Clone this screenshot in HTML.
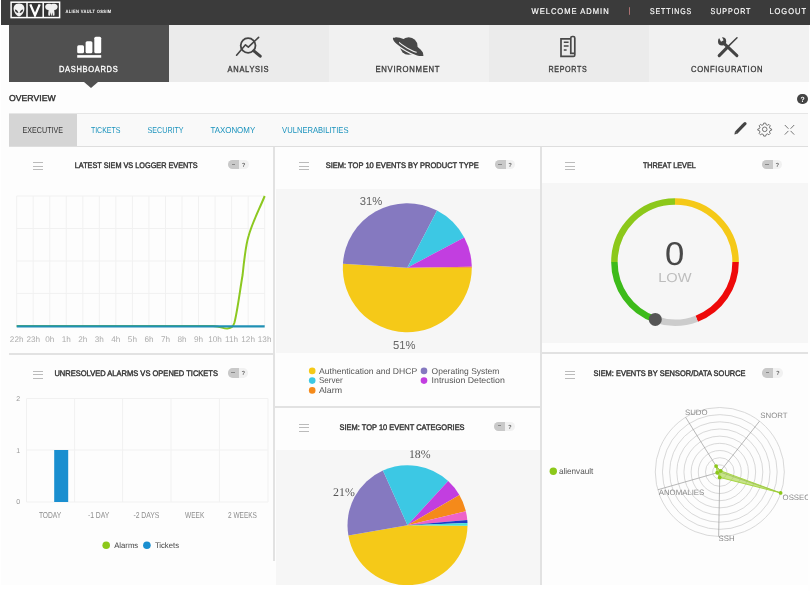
<!DOCTYPE html>
<html>
<head>
<meta charset="utf-8">
<style>
*{box-sizing:border-box;margin:0;padding:0}
html,body{width:811px;height:591px;overflow:hidden;background:#fff;font-family:"Liberation Sans",sans-serif;}
#root{position:relative;width:811px;height:591px;overflow:hidden;background:#fdfdfd}
.abs{position:absolute}
#top{left:1px;top:0;width:809px;height:24.5px;background:#3b3b3b}
.nav{position:absolute;top:25px;height:57px;width:160px}
.ham{position:absolute;width:10px;height:8px;border-top:1px solid #bbb;border-bottom:1px solid #bbb}
.ham:after{content:"";position:absolute;left:0;top:2.5px;width:10px;height:1px;background:#bbb}
.pill{position:absolute;width:20.6px;height:9.4px;border-radius:4.7px;background:#f1f1f1;overflow:hidden}
.pill i{position:absolute;left:0;top:0;width:11px;height:10px;background:#c9c9c9}
.pill b{position:absolute;left:3.7px;top:3.9px;width:3.4px;height:1px;background:#888}
.vl{position:absolute;width:2px;background:#e2e2e2}
.hl{position:absolute;height:2px;background:#e2e2e2}
.gbg{position:absolute;background:#f6f6f6}
svg text{font-family:"Liberation Sans",sans-serif;text-rendering:geometricPrecision}
</style>
</head>
<body>
<div id="root">
<div id="top" class="abs"></div>
<svg class="abs" style="left:0;top:0" width="70" height="25" viewBox="0 0 70 25">
<rect x="11.1" y="2.2" width="48.5" height="15.4" fill="#343434" stroke="#fff" stroke-width="1.5"/>
<path d="M27,2.2 V17.6 M43.2,2.2 V17.6" stroke="#fff" stroke-width="1.5"/>
<path d="M19,3.6 C23.4,3.6 24.8,6.8 24.3,9.8 C23.8,12.8 21,16.4 19,16.4 C17,16.4 14.2,12.8 13.7,9.8 C13.2,6.8 14.6,3.6 19,3.6 Z" fill="#f2f2f2"/>
<path d="M14.9,9.4 C16.4,9.4 18.2,11 18.4,13 C16.5,13 14.9,11.4 14.9,9.4 Z M23.1,9.4 C21.6,9.4 19.8,11 19.6,13 C21.5,13 23.1,11.4 23.1,9.4 Z" fill="#383838"/>
<path d="M30.3,4.4 L35,15.4 L39.7,4.4" fill="none" stroke="#fff" stroke-width="2.3"/>
<path d="M45.6,5.2 C47,3.6 49.4,3.6 51.4,4.2 C53.4,3.6 55.8,3.6 57.2,5.2 C58.2,6.8 57.4,9 55.8,9.8 L54.2,10 C54.4,12 54.8,13.8 54.4,15.6 L52.8,15.8 L52.5,12.2 L51.4,16.4 L50.3,12.2 L50,15.8 L48.4,15.6 C48,13.8 48.4,12 48.6,10 L47,9.8 C45.4,9 44.6,6.8 45.6,5.2 Z" fill="#efefef"/>
</svg>
<div class="nav" style="left:9px;background:#505050"></div>
<div class="nav" style="left:169px;background:#ebebeb"></div>
<div class="nav" style="left:329px;background:#f1f1f1"></div>
<div class="nav" style="left:489px;background:#ebebeb"></div>
<div class="nav" style="left:649px;background:#f1f1f1"></div>
<div class="abs" style="left:84px;top:82px;width:0;height:0;border-left:7px solid transparent;border-right:7px solid transparent;border-top:6px solid #505050"></div>
<svg class="abs" style="left:0;top:25px" width="811" height="57" viewBox="0 25 811 57">
<g fill="#fff">
<rect x="77.2" y="45.2" width="6.8" height="8" rx="1.5"/>
<rect x="85.6" y="41.2" width="6.8" height="12" rx="1.5"/>
<rect x="94.3" y="36.8" width="6.9" height="16.4" rx="1.5"/>
<rect x="77.2" y="55.1" width="24" height="2.6"/>
</g>
<g fill="none" stroke="#444" stroke-linecap="round" stroke-linejoin="round">
<circle cx="248.1" cy="45.5" r="7.4" stroke-width="1.8"/>
<path d="M253.8,50.8 L260.2,56.2" stroke-width="3"/>
<path d="M236.6,55.2 L245.5,44.8 L248.3,47.1 L258.6,37.4" stroke-width="1.6"/>
</g>
<g>
<clipPath id="pl"><circle cx="408.7" cy="46" r="10.4"/></clipPath>
<g transform="translate(408.5,46.2) rotate(29.5)"><ellipse cx="0" cy="0" rx="16.6" ry="4.4" fill="#484848"/></g>
<circle cx="408.7" cy="46" r="8.8" fill="#484848"/>
<g clip-path="url(#pl)"><g transform="translate(408.5,46.2) rotate(29.5)" fill="none">
<path d="M-16.6,0 A16.6,3.9 0 0 0 16.6,0" stroke="#f1f1f1" stroke-width="4.3"/>
</g></g>
<g transform="translate(408.5,46.2) rotate(29.5)" fill="none">
<path d="M-16.6,0 A16.6,3.9 0 0 0 16.6,0" stroke="#484848" stroke-width="2.1"/>
</g>
</g>
<g fill="none" stroke="#484848" stroke-width="1.7">
<path d="M570.8,38.9 L561,38.9 L561,56.3 L573.4,56.3 Q574.8,56.3 574.8,54.9 L574.8,37.9 Q574.8,36.5 573.2,36.5 L572.4,36.5 Q570.8,36.5 570.8,37.9 L570.8,53.4 L574.8,53.4"/>
<path d="M563.8,42.2 L568.6,42.2 M563.8,46 L568.6,46 M563.8,49.9 L566.6,49.9" stroke-width="1.5"/>
</g>
<g stroke="#444" stroke-linecap="round" fill="none">
<path d="M723.5,42.8 L736.9,55.7" stroke-width="3"/>
<circle cx="722.1" cy="41.4" r="4.1" fill="#444" stroke="none"/>
<path d="M722.3,41 L719.6,35.6" stroke="#f1f1f1" stroke-width="2.9" stroke-linecap="butt"/>
<path d="M737,37.8 L728,46.6" stroke-width="1.5"/>
<path d="M726.6,48.2 L719.2,55.6" stroke-width="3.1"/>
</g>
</svg>
<div class="abs" style="left:797.2px;top:93.6px;width:10.6px;height:10.6px;border-radius:50%;background:#444"></div>
<div class="abs" style="left:9px;top:113px;width:799px;height:34px;background:#f9f9f9;border-top:1px solid #e6e6e6;border-bottom:1px solid #dedede"></div>
<div class="abs" style="left:9px;top:114px;width:68px;height:32px;background:#d5d5d5"></div>
<svg class="abs" style="left:725px;top:115px" width="86" height="30" viewBox="725 115 86 30">
<path d="M736.2,132.6 L743.2,125.4" stroke="#444" stroke-width="3.2" fill="none"/>
<path d="M743.4,125.2 L745,123.6" stroke="#444" stroke-width="3.2" stroke-linecap="round" fill="none"/>
<path d="M734.4,134.4 L735,131.6 L737.2,133.8 Z" fill="#444"/>
<g fill="none" stroke="#666" stroke-width="0.9">
<circle cx="764.7" cy="129.3" r="2.3"/>
<path d="M763.7,123.1 L765.7,123.1 L766.1,124.7 L767.5,125.3 L768.9,124.4 L770.3,125.8 L769.4,127.2 L770,128.6 L771.6,129 L771.6,130.2 L770,130.6 L769.4,132 L770.3,133.4 L768.9,134.8 L767.5,133.9 L766.1,134.5 L765.7,136.1 L763.7,136.1 L763.3,134.5 L761.9,133.9 L760.5,134.8 L759.1,133.4 L760,132 L759.4,130.6 L757.8,130.2 L757.8,129 L759.4,128.6 L760,127.2 L759.1,125.8 L760.5,124.4 L761.9,125.3 L763.3,124.7 Z"/>
</g>
<g stroke="#666" stroke-width="0.9" fill="none">
<path d="M784.8,125 L788.4,128.7 M794.2,125 L790.6,128.7 M784.8,134.6 L788.4,130.9 M794.2,134.6 L790.6,130.9"/>
</g>
</svg>
<div class="vl" style="left:273.4px;top:147px;height:413.7px"></div>
<div class="vl" style="left:539.5px;top:147px;height:439px"></div>
<div class="hl" style="left:9px;top:353px;width:265px"></div>
<div class="hl" style="left:275px;top:405.9px;width:265px"></div>
<div class="hl" style="left:541px;top:352px;width:268px"></div>
<div class="gbg" style="left:275.5px;top:189px;width:264px;height:164px"></div>
<div class="gbg" style="left:275.5px;top:449.5px;width:264px;height:136px"></div>
<div class="gbg" style="left:541.5px;top:183px;width:267px;height:160px"></div>
<div class="ham" style="left:33px;top:162.3px"></div><div class="pill" style="left:228px;top:160.10000000000002px"><i></i><b></b></div>
<div class="ham" style="left:298.5px;top:162.3px"></div><div class="pill" style="left:494.6px;top:160.10000000000002px"><i></i><b></b></div>
<div class="ham" style="left:565px;top:162.3px"></div><div class="pill" style="left:761.8px;top:160.10000000000002px"><i></i><b></b></div>
<div class="ham" style="left:33px;top:370.5px"></div><div class="pill" style="left:227.8px;top:368.3px"><i></i><b></b></div>
<div class="ham" style="left:299px;top:423.8px"></div><div class="pill" style="left:494.3px;top:421.6px"><i></i><b></b></div>
<div class="ham" style="left:565px;top:370.5px"></div><div class="pill" style="left:762.3px;top:368.3px"><i></i><b></b></div>
<svg class="abs" style="left:0;top:0;will-change:transform" width="811" height="591" viewBox="0 0 811 591">
<text x="531.5" y="13.6" font-size="8.3" fill="#fff" font-weight="normal" textLength="78.20" lengthAdjust="spacingAndGlyphs" letter-spacing="1.1" stroke="#fff" stroke-width="0.18">WELCOME ADMIN</text>
<text x="649.9" y="13.6" font-size="8.3" fill="#fff" font-weight="normal" textLength="42.30" lengthAdjust="spacingAndGlyphs" letter-spacing="1.1" stroke="#fff" stroke-width="0.18">SETTINGS</text>
<text x="710.5" y="13.6" font-size="8.3" fill="#fff" font-weight="normal" textLength="40.90" lengthAdjust="spacingAndGlyphs" letter-spacing="1.1" stroke="#fff" stroke-width="0.18">SUPPORT</text>
<text x="769.4" y="13.6" font-size="8.3" fill="#fff" font-weight="normal" textLength="37.60" lengthAdjust="spacingAndGlyphs" letter-spacing="1.1" stroke="#fff" stroke-width="0.18">LOGOUT</text>
<rect x="629" y="7.2" width="0.9" height="7.6" fill="#b87878"/>
<text x="65.4" y="12.8" font-size="4.6" fill="#fff" font-weight="bold" textLength="46.20" lengthAdjust="spacingAndGlyphs" letter-spacing="0.4">ALIEN VAULT OSSIM</text>
<text x="58.9" y="71.6" font-size="8.7" fill="#fff" font-weight="normal" textLength="59.50" lengthAdjust="spacingAndGlyphs" letter-spacing="0.8" stroke="#fff" stroke-width="0.32">DASHBOARDS</text>
<text x="227.6" y="71.6" font-size="8.7" fill="#3a3a3a" font-weight="normal" textLength="41.70" lengthAdjust="spacingAndGlyphs" letter-spacing="0.8" stroke="#3a3a3a" stroke-width="0.32">ANALYSIS</text>
<text x="375.4" y="71.6" font-size="8.7" fill="#3a3a3a" font-weight="normal" textLength="64.80" lengthAdjust="spacingAndGlyphs" letter-spacing="0.8" stroke="#3a3a3a" stroke-width="0.32">ENVIRONMENT</text>
<text x="548.5" y="71.6" font-size="8.7" fill="#3a3a3a" font-weight="normal" textLength="38.80" lengthAdjust="spacingAndGlyphs" letter-spacing="0.8" stroke="#3a3a3a" stroke-width="0.32">REPORTS</text>
<text x="691" y="71.6" font-size="8.7" fill="#3a3a3a" font-weight="normal" textLength="72.20" lengthAdjust="spacingAndGlyphs" letter-spacing="0.8" stroke="#3a3a3a" stroke-width="0.32">CONFIGURATION</text>
<text x="9.1" y="101.2" font-size="8.6" fill="#333" font-weight="normal" textLength="46.50" lengthAdjust="spacingAndGlyphs" stroke="#333" stroke-width="0.4">OVERVIEW</text>
<text x="800.4" y="101.7" font-size="7.5" fill="#fff" font-weight="bold" textLength="4.20" lengthAdjust="spacingAndGlyphs">?</text>
<text x="22.6" y="133.3" font-size="8.6" fill="#333" font-weight="normal" textLength="40.40" lengthAdjust="spacingAndGlyphs">EXECUTIVE</text>
<text x="90.9" y="133.3" font-size="8.6" fill="#1b93bd" font-weight="normal" textLength="29.60" lengthAdjust="spacingAndGlyphs">TICKETS</text>
<text x="147.6" y="133.3" font-size="8.6" fill="#1b93bd" font-weight="normal" textLength="36.00" lengthAdjust="spacingAndGlyphs">SECURITY</text>
<text x="210.4" y="133.3" font-size="8.6" fill="#1b93bd" font-weight="normal" textLength="44.80" lengthAdjust="spacingAndGlyphs">TAXONOMY</text>
<text x="282.1" y="133.3" font-size="8.6" fill="#1b93bd" font-weight="normal" textLength="66.40" lengthAdjust="spacingAndGlyphs">VULNERABILITIES</text>
<text x="74.8" y="168.1" font-size="8.1" fill="#333" font-weight="normal" textLength="122.80" lengthAdjust="spacingAndGlyphs" stroke="#333" stroke-width="0.4">LATEST SIEM VS LOGGER EVENTS</text>
<text x="325.7" y="168.1" font-size="8.1" fill="#333" font-weight="normal" textLength="153.00" lengthAdjust="spacingAndGlyphs" stroke="#333" stroke-width="0.4">SIEM: TOP 10 EVENTS BY PRODUCT TYPE</text>
<text x="642.9" y="168.1" font-size="8.1" fill="#333" font-weight="normal" textLength="52.90" lengthAdjust="spacingAndGlyphs" stroke="#333" stroke-width="0.4">THREAT LEVEL</text>
<text x="54.4" y="376.3" font-size="8.1" fill="#333" font-weight="normal" textLength="163.60" lengthAdjust="spacingAndGlyphs" stroke="#333" stroke-width="0.4">UNRESOLVED ALARMS VS OPENED TICKETS</text>
<text x="339.5" y="429.6" font-size="8.1" fill="#333" font-weight="normal" textLength="125.10" lengthAdjust="spacingAndGlyphs" stroke="#333" stroke-width="0.4">SIEM: TOP 10 EVENT CATEGORIES</text>
<text x="593.6" y="376.3" font-size="8.1" fill="#333" font-weight="normal" textLength="151.90" lengthAdjust="spacingAndGlyphs" stroke="#333" stroke-width="0.4">SIEM: EVENTS BY SENSOR/DATA SOURCE</text>
<text x="243.6" y="167.0" font-size="6" fill="#666" font-weight="bold" text-anchor="middle">?</text>
<text x="510.20000000000005" y="167.0" font-size="6" fill="#666" font-weight="bold" text-anchor="middle">?</text>
<text x="777.4" y="167.0" font-size="6" fill="#666" font-weight="bold" text-anchor="middle">?</text>
<text x="243.4" y="375.2" font-size="6" fill="#666" font-weight="bold" text-anchor="middle">?</text>
<text x="509.90000000000003" y="428.5" font-size="6" fill="#666" font-weight="bold" text-anchor="middle">?</text>
<text x="777.9" y="375.2" font-size="6" fill="#666" font-weight="bold" text-anchor="middle">?</text>
<line x1="16.70" y1="196" x2="16.70" y2="326" stroke="#f1f1f1" stroke-width="1"/>
<line x1="33.23" y1="196" x2="33.23" y2="326" stroke="#f1f1f1" stroke-width="1"/>
<line x1="49.76" y1="196" x2="49.76" y2="326" stroke="#f1f1f1" stroke-width="1"/>
<line x1="66.29" y1="196" x2="66.29" y2="326" stroke="#f1f1f1" stroke-width="1"/>
<line x1="82.82" y1="196" x2="82.82" y2="326" stroke="#f1f1f1" stroke-width="1"/>
<line x1="99.35" y1="196" x2="99.35" y2="326" stroke="#f1f1f1" stroke-width="1"/>
<line x1="115.88" y1="196" x2="115.88" y2="326" stroke="#f1f1f1" stroke-width="1"/>
<line x1="132.41" y1="196" x2="132.41" y2="326" stroke="#f1f1f1" stroke-width="1"/>
<line x1="148.94" y1="196" x2="148.94" y2="326" stroke="#f1f1f1" stroke-width="1"/>
<line x1="165.47" y1="196" x2="165.47" y2="326" stroke="#f1f1f1" stroke-width="1"/>
<line x1="182.00" y1="196" x2="182.00" y2="326" stroke="#f1f1f1" stroke-width="1"/>
<line x1="198.53" y1="196" x2="198.53" y2="326" stroke="#f1f1f1" stroke-width="1"/>
<line x1="215.06" y1="196" x2="215.06" y2="326" stroke="#f1f1f1" stroke-width="1"/>
<line x1="231.59" y1="196" x2="231.59" y2="326" stroke="#f1f1f1" stroke-width="1"/>
<line x1="248.12" y1="196" x2="248.12" y2="326" stroke="#f1f1f1" stroke-width="1"/>
<line x1="264.65" y1="196" x2="264.65" y2="326" stroke="#f1f1f1" stroke-width="1"/>
<line x1="16.7" y1="196" x2="264.7" y2="196" stroke="#f1f1f1" stroke-width="1"/>
<line x1="16.7" y1="228.5" x2="264.7" y2="228.5" stroke="#f1f1f1" stroke-width="1"/>
<line x1="16.7" y1="261" x2="264.7" y2="261" stroke="#f1f1f1" stroke-width="1"/>
<line x1="16.7" y1="293.4" x2="264.7" y2="293.4" stroke="#f1f1f1" stroke-width="1"/>
<text x="16.70" y="342.2" text-anchor="middle" font-size="8.2" fill="#adadad">22h</text>
<text x="33.23" y="342.2" text-anchor="middle" font-size="8.2" fill="#adadad">23h</text>
<text x="49.76" y="342.2" text-anchor="middle" font-size="8.2" fill="#adadad">0h</text>
<text x="66.29" y="342.2" text-anchor="middle" font-size="8.2" fill="#adadad">1h</text>
<text x="82.82" y="342.2" text-anchor="middle" font-size="8.2" fill="#adadad">2h</text>
<text x="99.35" y="342.2" text-anchor="middle" font-size="8.2" fill="#adadad">3h</text>
<text x="115.88" y="342.2" text-anchor="middle" font-size="8.2" fill="#adadad">4h</text>
<text x="132.41" y="342.2" text-anchor="middle" font-size="8.2" fill="#adadad">5h</text>
<text x="148.94" y="342.2" text-anchor="middle" font-size="8.2" fill="#adadad">6h</text>
<text x="165.47" y="342.2" text-anchor="middle" font-size="8.2" fill="#adadad">7h</text>
<text x="182.00" y="342.2" text-anchor="middle" font-size="8.2" fill="#adadad">8h</text>
<text x="198.53" y="342.2" text-anchor="middle" font-size="8.2" fill="#adadad">9h</text>
<text x="215.06" y="342.2" text-anchor="middle" font-size="8.2" fill="#adadad">10h</text>
<text x="231.59" y="342.2" text-anchor="middle" font-size="8.2" fill="#adadad">11h</text>
<text x="248.12" y="342.2" text-anchor="middle" font-size="8.2" fill="#adadad">12h</text>
<text x="264.65" y="342.2" text-anchor="middle" font-size="8.2" fill="#adadad">13h</text>
<path d="M16.7,326 L213,326 C221,326 223,329 227.5,328.6 C231.5,328 233,327 234.3,323 C237,314 240,290 242.6,275 C244.5,256 246,244 248.6,236 C252.5,222 259,210 264.7,196" fill="none" stroke="#8cc820" stroke-width="2"/>
<line x1="16.7" y1="326.4" x2="264.7" y2="326.4" stroke="#2090b4" stroke-width="2.4"/>
<line x1="26.5" y1="398.5" x2="26.5" y2="502" stroke="#f1f1f1" stroke-width="1"/>
<line x1="74.6" y1="398.5" x2="74.6" y2="502" stroke="#f1f1f1" stroke-width="1"/>
<line x1="122.6" y1="398.5" x2="122.6" y2="502" stroke="#f1f1f1" stroke-width="1"/>
<line x1="171" y1="398.5" x2="171" y2="502" stroke="#f1f1f1" stroke-width="1"/>
<line x1="219.4" y1="398.5" x2="219.4" y2="502" stroke="#f1f1f1" stroke-width="1"/>
<line x1="268" y1="398.5" x2="268" y2="502" stroke="#f1f1f1" stroke-width="1"/>
<line x1="26.5" y1="398.5" x2="268" y2="398.5" stroke="#f1f1f1" stroke-width="1"/>
<line x1="26.5" y1="450" x2="268" y2="450" stroke="#f1f1f1" stroke-width="1"/>
<line x1="26.5" y1="502" x2="268" y2="502" stroke="#f1f1f1" stroke-width="1"/>
<rect x="54.2" y="450" width="14" height="52" fill="#1a8fd0"/>
<text x="18.3" y="400.5" text-anchor="middle" font-size="7" fill="#999">2</text>
<text x="18.3" y="452.5" text-anchor="middle" font-size="7" fill="#999">1</text>
<text x="18.3" y="503.8" text-anchor="middle" font-size="7" fill="#999">0</text>
<text x="38.9" y="518.4" font-size="8.6" fill="#8e8e8e" font-weight="normal" textLength="22.40" lengthAdjust="spacingAndGlyphs">TODAY</text>
<text x="87.9" y="518.4" font-size="8.6" fill="#8e8e8e" font-weight="normal" textLength="21.50" lengthAdjust="spacingAndGlyphs">-1 DAY</text>
<text x="133.4" y="518.4" font-size="8.6" fill="#8e8e8e" font-weight="normal" textLength="26.00" lengthAdjust="spacingAndGlyphs">-2 DAYS</text>
<text x="185" y="518.4" font-size="8.6" fill="#8e8e8e" font-weight="normal" textLength="19.30" lengthAdjust="spacingAndGlyphs">WEEK</text>
<text x="228" y="518.4" font-size="8.6" fill="#8e8e8e" font-weight="normal" textLength="28.90" lengthAdjust="spacingAndGlyphs">2 WEEKS</text>
<circle cx="106.2" cy="545.3" r="3.8" fill="#8cc81a"/>
<text x="114.2" y="548.2" font-size="8" fill="#444" font-weight="normal" textLength="24.00" lengthAdjust="spacingAndGlyphs">Alarms</text>
<circle cx="146.9" cy="545.3" r="3.8" fill="#1a8fd0"/>
<text x="154.9" y="548.2" font-size="8" fill="#444" font-weight="normal" textLength="24.10" lengthAdjust="spacingAndGlyphs">Tickets</text>
<path d="M407.3,267.7 L471.80,267.70 A64.5,64.5 0 1 1 342.93,263.65 Z" fill="#f5c918"/>
<path d="M407.3,267.7 L342.93,263.65 A64.5,64.5 0 0 1 437.08,210.49 Z" fill="#8579c0"/>
<path d="M407.3,267.7 L437.08,210.49 A64.5,64.5 0 0 1 464.25,237.42 Z" fill="#3cc8e4"/>
<path d="M407.3,267.7 L464.25,237.42 A64.5,64.5 0 0 1 471.79,266.80 Z" fill="#c23ee0"/>
<path d="M407.3,267.7 L471.79,266.80 A64.5,64.5 0 0 1 471.80,267.70 Z" fill="#f58a1a"/>
<text x="359.7" y="204.5" font-size="11.6" fill="#666" font-weight="normal" textLength="22.50" lengthAdjust="spacingAndGlyphs">31%</text>
<text x="393" y="349.3" font-size="11.6" fill="#666" font-weight="normal" textLength="22.50" lengthAdjust="spacingAndGlyphs">51%</text>
<circle cx="312.2" cy="370.9" r="3.3" fill="#f5c918"/>
<text x="319.0" y="373.7" font-size="8.4" fill="#555" font-weight="normal" textLength="98.20" lengthAdjust="spacingAndGlyphs">Authentication and DHCP</text>
<circle cx="312.2" cy="380.6" r="3.3" fill="#3cc8e4"/>
<text x="319.0" y="383.40000000000003" font-size="8.4" fill="#555" font-weight="normal" textLength="23.60" lengthAdjust="spacingAndGlyphs">Server</text>
<circle cx="312.2" cy="390.4" r="3.3" fill="#f58a1a"/>
<text x="319.0" y="393.2" font-size="8.4" fill="#555" font-weight="normal" textLength="23.00" lengthAdjust="spacingAndGlyphs">Alarm</text>
<circle cx="424" cy="370.9" r="3.3" fill="#8579c0"/>
<text x="431.6" y="373.7" font-size="8.4" fill="#555" font-weight="normal" textLength="67.80" lengthAdjust="spacingAndGlyphs">Operating System</text>
<circle cx="424" cy="380.6" r="3.3" fill="#c23ee0"/>
<text x="431.6" y="383.40000000000003" font-size="8.4" fill="#555" font-weight="normal" textLength="73.20" lengthAdjust="spacingAndGlyphs">Intrusion Detection</text>
<path d="M407.5,525.2 L467.50,525.83 A60,60 0 0 1 348.38,535.41 Z" fill="#f5c918"/>
<path d="M407.5,525.2 L348.38,535.41 A60,60 0 0 1 382.90,470.47 Z" fill="#8579c0"/>
<path d="M407.5,525.2 L382.90,470.47 A60,60 0 0 1 448.19,481.11 Z" fill="#3cc8e4"/>
<path d="M407.5,525.2 L448.19,481.11 A60,60 0 0 1 459.41,495.11 Z" fill="#c23ee0"/>
<path d="M407.5,525.2 L459.41,495.11 A60,60 0 0 1 465.87,511.30 Z" fill="#f58a1a"/>
<path d="M407.5,525.2 L465.87,511.30 A60,60 0 0 1 467.28,520.07 Z" fill="#ee62c8"/>
<path d="M407.5,525.2 L467.28,520.07 A60,60 0 0 1 467.46,523.11 Z" fill="#1a3cc8"/>
<path d="M407.5,525.2 L467.46,523.11 A60,60 0 0 1 467.50,525.83 Z" fill="#48e0d8"/>
<text x="408.9" y="457.6" font-size="11.8" fill="#555" font-weight="normal" textLength="21.70" lengthAdjust="spacingAndGlyphs" style="font-family:'Liberation Serif',serif">18%</text>
<text x="333.1" y="495.6" font-size="11.8" fill="#555" font-weight="normal" textLength="21.80" lengthAdjust="spacingAndGlyphs" style="font-family:'Liberation Serif',serif">21%</text>
<path d="M655.27,319.40 A60.6,60.6 0 0 1 614.40,262.10" fill="none" stroke="#3dbb1a" stroke-width="6.5"/>
<path d="M614.40,262.10 A60.6,60.6 0 0 1 675.00,201.50" fill="none" stroke="#8cc81a" stroke-width="6.5"/>
<path d="M675.00,201.50 A60.6,60.6 0 0 1 735.60,262.10" fill="none" stroke="#f5c918" stroke-width="6.5"/>
<path d="M735.60,262.10 A60.6,60.6 0 0 1 696.72,318.67" fill="none" stroke="#ee0a0a" stroke-width="6.5"/>
<path d="M696.72,318.67 A60.6,60.6 0 0 1 655.27,319.40" fill="none" stroke="#cccccc" stroke-width="6.5"/>
<circle cx="655.27" cy="319.40" r="6.5" fill="#555"/>
<text x="664.9" y="264.7" font-size="33" fill="#484848" font-weight="normal" textLength="19.30" lengthAdjust="spacingAndGlyphs">0</text>
<text x="658.2" y="281.7" font-size="13" fill="#bdbdbd" font-weight="normal" textLength="33.40" lengthAdjust="spacingAndGlyphs">LOW</text>
<circle cx="719.8" cy="472" r="7.17" fill="none" stroke="#c8c8c8" stroke-width="0.7"/>
<circle cx="719.8" cy="472" r="14.34" fill="none" stroke="#c8c8c8" stroke-width="0.7"/>
<circle cx="719.8" cy="472" r="21.51" fill="none" stroke="#c8c8c8" stroke-width="0.7"/>
<circle cx="719.8" cy="472" r="28.68" fill="none" stroke="#c8c8c8" stroke-width="0.7"/>
<circle cx="719.8" cy="472" r="35.85" fill="none" stroke="#c8c8c8" stroke-width="0.7"/>
<circle cx="719.8" cy="472" r="43.02" fill="none" stroke="#c8c8c8" stroke-width="0.7"/>
<circle cx="719.8" cy="472" r="50.19" fill="none" stroke="#c8c8c8" stroke-width="0.7"/>
<circle cx="719.8" cy="472" r="57.36" fill="none" stroke="#c8c8c8" stroke-width="0.7"/>
<circle cx="719.8" cy="472" r="64.53" fill="none" stroke="#c8c8c8" stroke-width="0.7"/>
<line x1="719.8" y1="472" x2="780.79" y2="493.00" stroke="#999" stroke-width="0.7"/>
<line x1="719.8" y1="472" x2="718.67" y2="536.49" stroke="#999" stroke-width="0.7"/>
<line x1="719.8" y1="472" x2="657.80" y2="489.78" stroke="#999" stroke-width="0.7"/>
<line x1="719.8" y1="472" x2="685.62" y2="417.30" stroke="#999" stroke-width="0.7"/>
<line x1="719.8" y1="472" x2="759.51" y2="421.17" stroke="#999" stroke-width="0.7"/>
<polygon points="780.60,492.93 719.71,477.40 717.20,472.74 716.09,466.06 720.72,470.82" fill="#9ad02a" fill-opacity="0.55" stroke="#9ad02a" stroke-width="0.8"/>
<circle cx="780.60" cy="492.93" r="1.9" fill="#8cc81a"/>
<circle cx="719.71" cy="477.40" r="1.9" fill="#8cc81a"/>
<circle cx="717.20" cy="472.74" r="1.9" fill="#8cc81a"/>
<circle cx="716.09" cy="466.06" r="1.9" fill="#8cc81a"/>
<circle cx="720.72" cy="470.82" r="1.9" fill="#8cc81a"/>
<text x="696.3" y="415" text-anchor="middle" font-size="7.8" fill="#888">SUDO</text>
<text x="773.9" y="417.6" text-anchor="middle" font-size="7.8" fill="#888">SNORT</text>
<text x="782.6" y="500" text-anchor="start" font-size="7.8" fill="#888">OSSEC</text>
<text x="726.6" y="541.3" text-anchor="middle" font-size="7.8" fill="#888">SSH</text>
<text x="681.5" y="495.3" text-anchor="middle" font-size="7.8" fill="#888">ANOMALIES</text>
<circle cx="553.3" cy="471.3" r="3.7" fill="#8cc81a"/>
<text x="558.9" y="474.2" font-size="8.4" fill="#555" font-weight="normal" textLength="34.40" lengthAdjust="spacingAndGlyphs">alienvault</text>
</svg>
<div class="abs" style="left:0;top:585.3px;width:811px;height:6px;background:#fff"></div>
<div class="abs" style="left:0;top:0;width:1px;height:591px;background:#fff"></div>
<div class="abs" style="left:807.6px;top:82px;width:4px;height:509px;background:#fefefe"></div>
<div class="abs" style="left:810px;top:0;width:1px;height:591px;background:#fff"></div>
</div>
</body>
</html>
